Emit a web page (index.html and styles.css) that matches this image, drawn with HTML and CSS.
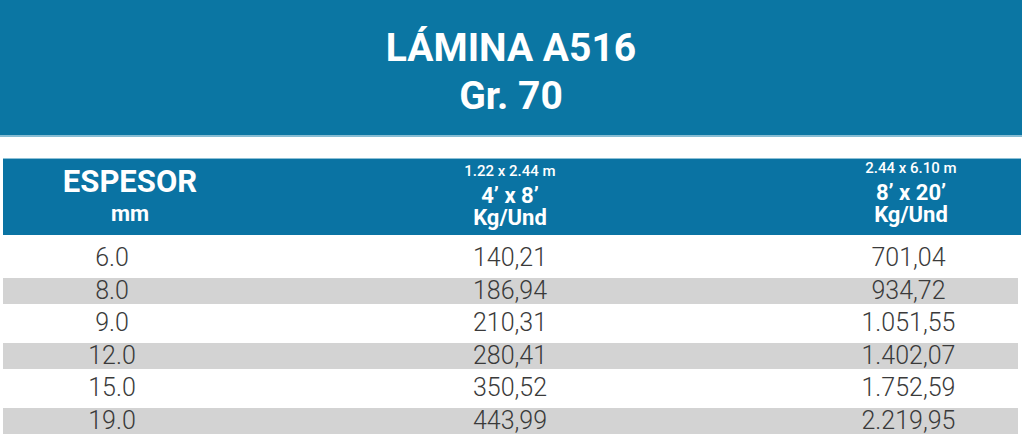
FILE: index.html
```html
<!DOCTYPE html>
<html lang="es">
<head>
<meta charset="utf-8">
<title>Lámina A516 Gr. 70</title>
<link rel="stylesheet" href="styles.css">
</head>
<body>
<div class="page">
  <header class="banner">
    <h1 class="title"><span>LÁMINA A516</span><span>Gr. 70</span></h1>
  </header>
  <div class="thead">
    <div class="th th-1">
      <div class="big">ESPESOR</div>
      <div class="unit">mm</div>
    </div>
    <div class="th th-2">
      <div class="small">1.22 x 2.44 m</div>
      <div class="mid">4’ x 8’</div>
      <div class="mid">Kg/Und</div>
    </div>
    <div class="th th-3">
      <div class="small">2.44 x 6.10 m</div>
      <div class="mid">8’ x 20’</div>
      <div class="mid">Kg/Und</div>
    </div>
  </div>
  <div class="tbody">
    <div class="row"><div class="c1">6.0</div><div class="c2">140,21</div><div class="c3">701,04</div></div>
    <div class="row alt"><div class="c1">8.0</div><div class="c2">186,94</div><div class="c3">934,72</div></div>
    <div class="row"><div class="c1">9.0</div><div class="c2">210,31</div><div class="c3">1.051,55</div></div>
    <div class="row alt"><div class="c1">12.0</div><div class="c2">280,41</div><div class="c3">1.402,07</div></div>
    <div class="row"><div class="c1">15.0</div><div class="c2">350,52</div><div class="c3">1.752,59</div></div>
    <div class="row alt"><div class="c1">19.0</div><div class="c2">443,99</div><div class="c3">2.219,95</div></div>
  </div>
</div>
</body>
</html>
```
FILE: styles.css
```css
* { box-sizing: border-box; }
html, body { margin: 0; padding: 0; background: #ffffff; }
body { font-family: Roboto, "Liberation Sans", Arial, sans-serif; }
.page { width: 1024px; height: 442px; overflow: hidden; }

.banner {
  width: 1022px;
  height: 137px;
  background: #0b76a3;
  border-bottom: 2px solid #86bcd3;
  padding-top: 24px;
}
.title {
  margin: 0;
  color: #ffffff;
  font-weight: 700;
  font-size: 39px;
  line-height: 48px;
  text-align: center;
  display: flex;
  flex-direction: column;
  align-items: center;
}

.thead {
  margin: 21px 0 0 3px;
  width: 1018px;
  height: 77px;
  background: #0a73a3;
  border-top: 1px solid #8cc0d6;
  color: #ffffff;
  display: grid;
  grid-template-columns: 254px 506px 1fr;
  font-weight: 700;
  text-align: center;
}
.th-1 { padding-top: 7px; }
.th-1 .big { font-size: 31px; line-height: 32px; }
.th-1 .unit { font-size: 22px; line-height: 24px; margin-top: 4px; }
.th-2 { padding-top: 4px; }
.th-3 { padding-top: 1px; padding-left: 38px; }
.small { font-size: 15px; line-height: 16px; font-weight: 500; margin-bottom: 6px; }
.mid { font-size: 22px; line-height: 22px; }

.tbody {
  margin: 10px 0 0 3px;
  width: 1015px;
  display: grid;
  row-gap: 6.5px;
}
.row {
  display: grid;
  grid-template-columns: 218px 578px 1fr;
  height: 26px;
  align-items: center;
  text-align: center;
  color: #3a3a3a;
  font-weight: 300;
  font-size: 25px;
  line-height: 26px;
}
.row.alt { background: #d3d3d3; }
```
